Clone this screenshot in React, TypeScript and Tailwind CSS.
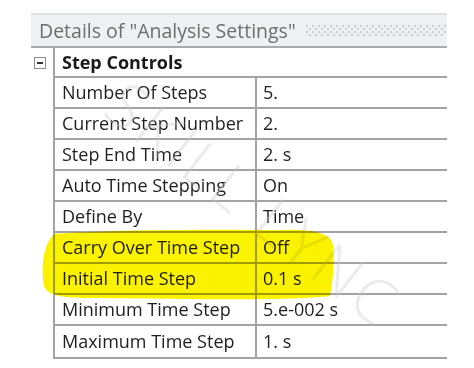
import React from "react";

const rows: [string, string][] = [
  ["Number Of Steps", "5."],
  ["Current Step Number", "2."],
  ["Step End Time", "2. s"],
  ["Auto Time Stepping", "On"],
  ["Define By", "Time"],
  ["Carry Over Time Step", "Off"],
  ["Initial Time Step", "0.1 s"],
  ["Minimum Time Step", "5.e-002 s"],
  ["Maximum Time Step", "1. s"],
];

function Dots() {
  // checker dots to the right of the panel title
  return (
    <svg width="142" height="12" className="ml-[10px]">
      <defs>
        <pattern id="dots" width="6" height="6" patternUnits="userSpaceOnUse">
          <rect x="0" y="0" width="2" height="2" fill="#c9cbd0" />
          <rect x="3" y="3" width="2" height="2" fill="#c9cbd0" />
        </pattern>
      </defs>
      <rect width="142" height="12" fill="url(#dots)" />
    </svg>
  );
}

export default function App() {
  return (
    <div
      className="relative w-[474px] h-[368px] bg-white overflow-hidden pt-[13px] pl-[31px]"
      style={{ fontFamily: '"Open Sans", "DejaVu Sans", sans-serif' }}
    >
      <div className="w-[416px] h-[35px] bg-[#eef0f3] border-t-2 border-[#dfe1e6] border-b-2 border-b-[#a9aaad] flex items-center pl-[8px]">
        <span className="text-[19.5px] text-[#6e6e6e] leading-none whitespace-nowrap">
          Details of "Analysis Settings"
        </span>
        <Dots />
      </div>

      <div className="flex">
        <div className="w-[22px] pt-[9px] pl-[3px]">
          <div className="w-[12px] h-[12px] border border-[#8c8c8c] bg-white flex items-center justify-center">
            <div className="w-[6px] h-[2px] bg-[#333]" />
          </div>
        </div>
        <div className="w-[394px] border-l-2 border-[#a3a3a3] border-b-2 border-b-[#a3a3a3]">
          <div className="h-[30px] border-b-2 border-[#a3a3a3] flex items-center pl-[7px] text-[18px] font-bold text-[#1a1a1a]">
            Step Controls
          </div>
          {rows.map(([name, value], i) => (
            <div
              key={name}
              className={`h-[31px] flex text-[18px] font-medium text-[#1f1f1f] ${i < rows.length - 1 ? "border-b-2 border-[#a3a3a3]" : ""}`}
            >
              <div className="w-[202px] border-r-2 border-[#a3a3a3] flex items-center pl-[7px] whitespace-nowrap">
                {name}
              </div>
              <div className="flex-1 flex items-center pl-[6px] whitespace-nowrap">{value}</div>
            </div>
          ))}
        </div>
      </div>

      {/* watermark */}
      <div className="absolute left-[80px] top-[150px] w-[330px] text-center rotate-[38deg] text-[62px] font-light tracking-[4px] text-[#c8c8c8] opacity-35 pointer-events-none whitespace-nowrap">
        SKILL LYNC
      </div>

      {/* marker highlight */}
      <svg
        className="absolute left-[40px] top-[226px] mix-blend-multiply pointer-events-none"
        width="300"
        height="78"
        viewBox="0 0 300 78"
      >
        <path
          d="M14 8 C60 4 150 3 240 4 C270 3 292 6 293 20 C295 40 292 60 290 70 C250 75 150 73 60 72 C30 72 8 72 4 60 C1 45 2 20 14 8 Z"
          fill="#fbf200"
        />
      </svg>
    </div>
  );
}
